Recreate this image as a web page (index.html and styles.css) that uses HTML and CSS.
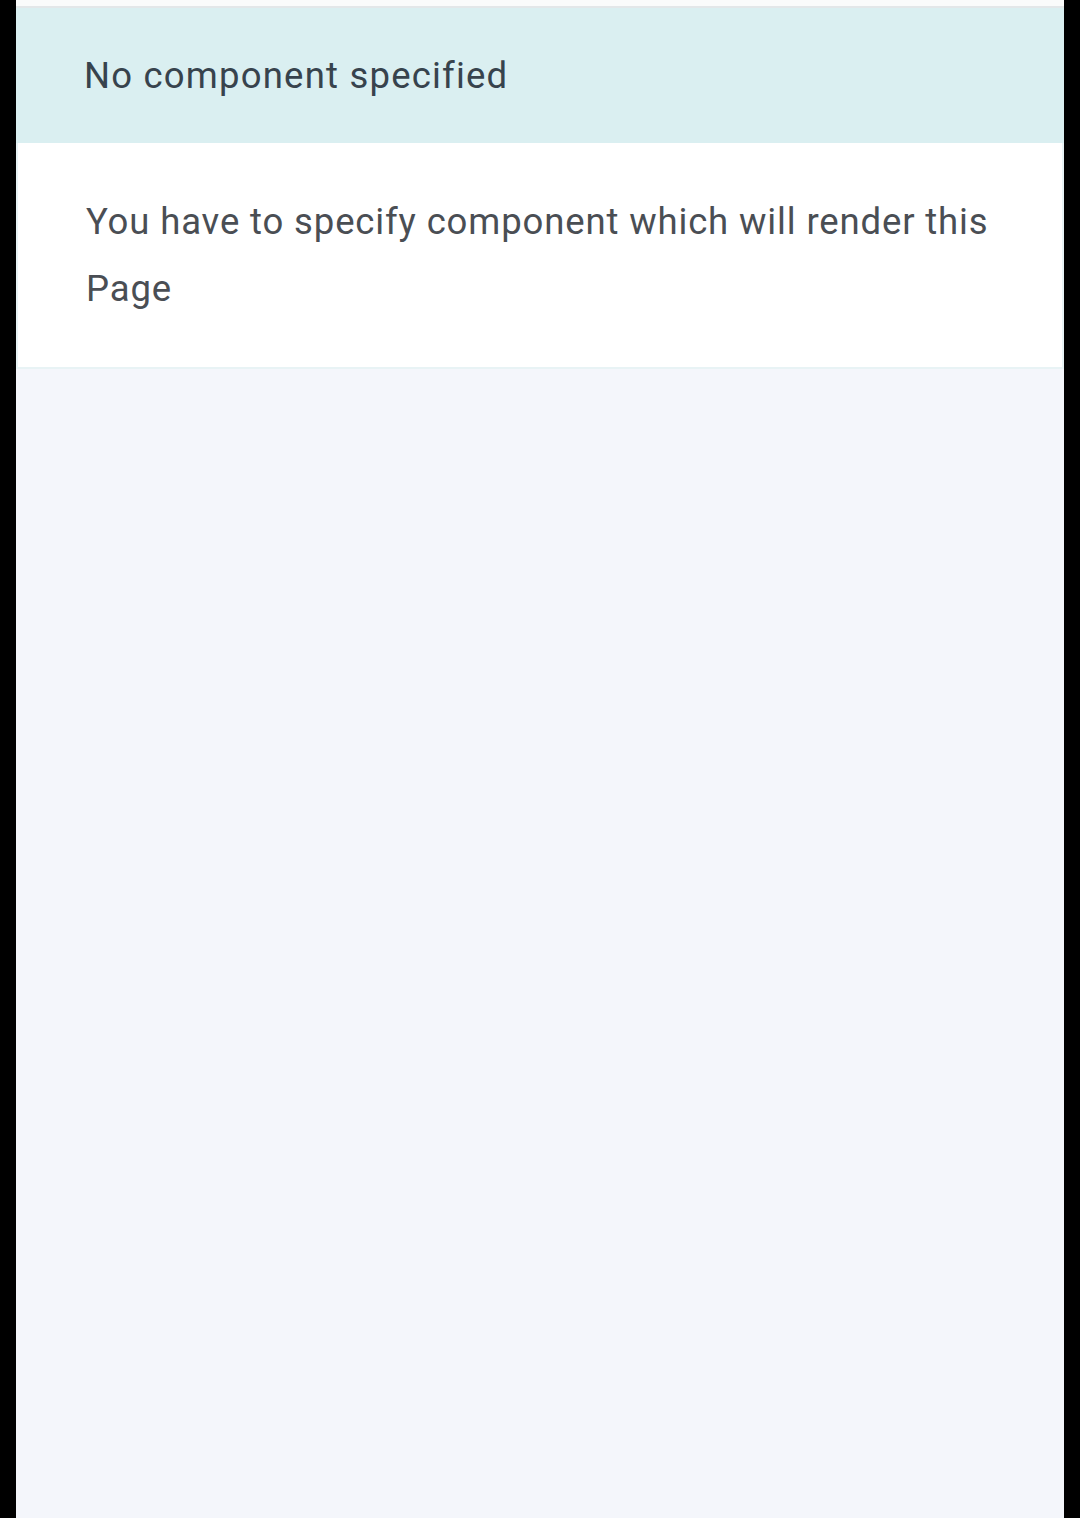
FILE: index.html
```html
<!DOCTYPE html>
<html lang="en">
<head>
<meta charset="utf-8">
<title>No component specified</title>
<link rel="stylesheet" href="styles.css">
</head>
<body>
<div class="screen">
  <div class="topbar"></div>
  <div class="alert-header">No component specified</div>
  <div class="alert-body">
    <p class="message">You have to specify component which will render this Page</p>
  </div>
</div>
</body>
</html>
```
FILE: styles.css
```css
html, body {
  margin: 0;
  padding: 0;
  background: #000;
}
.screen {
  margin: 0 16px;
  min-height: 1518px;
  background: #f4f6fb;
  font-family: Roboto, "Noto Sans", Arial, sans-serif;
  display: flex;
  flex-direction: column;
}
.topbar {
  height: 6px;
  background: #fafbfb;
  border-bottom: 2px solid #e3e7e9;
}
.alert-header {
  height: 135px;
  box-sizing: border-box;
  background: #daeff1;
  color: #37434d;
  font-size: 36.5px;
  letter-spacing: 1.2px;
  display: flex;
  align-items: center;
  padding-left: 68px;
}
.alert-body {
  background: #fff;
  border: 2px solid #e8f3f5;
  border-top: none;
  padding: 45px 40px 45px 68px;
}
.message {
  margin: 0;
  font-size: 36.5px;
  letter-spacing: 0.86px;
  line-height: 67px;
  color: #4a4e54;
}
```
